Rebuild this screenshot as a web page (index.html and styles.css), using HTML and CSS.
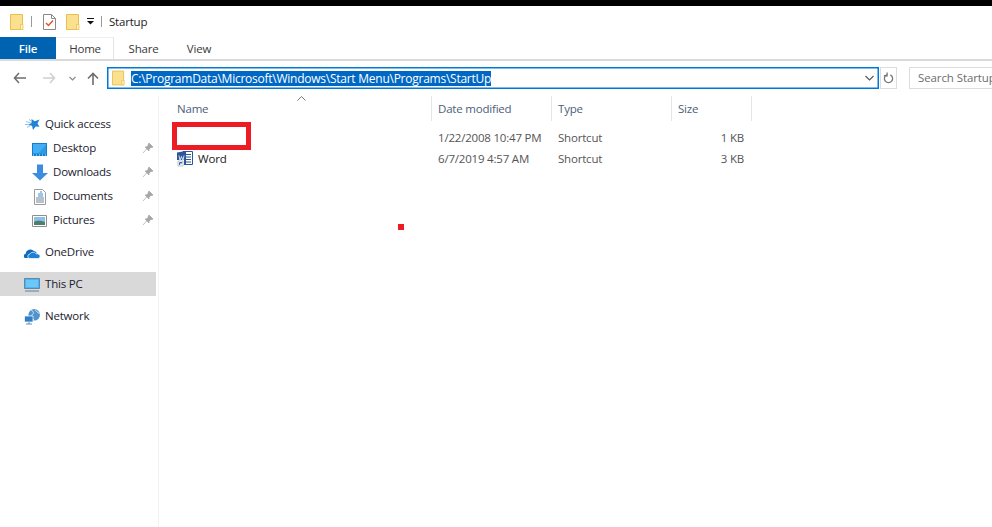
FILE: index.html
```html
<!DOCTYPE html>
<html lang="en">
<head>
<meta charset="utf-8">
<title>Startup</title>
<link rel="stylesheet" href="styles.css">
</head>
<body>
<div class="window">
  <div class="blackbar"></div>
  <div class="titlebar">
    <svg class="folder" viewBox="0 0 14 16"><path d="M.5.5h12v15H.5z" fill="#fbe08f" stroke="#e8c04f"/><path d="M10.5 10.5h2.500v5h-2.500z" fill="#fff3c4" stroke="#e8c04f" stroke-width=".8"/></svg>
    <span class="qsep first"></span>
    <svg class="props" viewBox="0 0 13 16"><path d="M.5.5h8l4 4v11H.5z" fill="#fff" stroke="#8a8a8a"/><path d="M8.500.5v4h4" fill="none" stroke="#8a8a8a"/><path d="M3 9l2.500 2.500L10 6.500" fill="none" stroke="#e2582a" stroke-width="1.500"/></svg>
    <svg class="folder second" viewBox="0 0 14 16"><path d="M.5.5h12v15H.5z" fill="#fbe08f" stroke="#e8c04f"/><path d="M10.500 10.500h2.500v5h-2.500z" fill="#fff3c4" stroke="#e8c04f" stroke-width=".8"/></svg>
    <svg class="qdrop" viewBox="0 0 7 7"><path d="M0 .5h7" stroke="#111" fill="none"/><path d="M0 3h7L3.500 6.500z" fill="#111"/></svg>
    <span class="qsep"></span>
    <span class="wintitle">Startup</span>
  </div>
  <div class="ribbon">
    <span class="tab file">File</span>
    <span class="tab home">Home</span>
    <span class="tab share">Share</span>
    <span class="tab view">View</span>
  </div>
  <div class="addressrow">
    <svg class="nav back" viewBox="0 0 13 12"><path d="M6 1L1.500 6 6 11M1.500 6H13" fill="none" stroke="#6d6d6d" stroke-width="1.500"/></svg>
    <svg class="nav fwd" viewBox="0 0 13 12"><path d="M7 1l4.500 5L7 11M11.500 6H0" fill="none" stroke="#cfcfcf" stroke-width="1.500"/></svg>
    <svg class="nav down" viewBox="0 0 7 5"><path d="M.5 1l3 3 3-3" fill="none" stroke="#8a8a8a" stroke-width="1.200"/></svg>
    <svg class="nav up" viewBox="0 0 12 13"><path d="M1 6.500L6 1.500l5 5M6 1.500V13" fill="none" stroke="#6d6d6d" stroke-width="1.600"/></svg>
    <div class="pathbox">
      <svg class="folder pathfolder" viewBox="0 0 14 16"><path d="M.5.5h12v15H.5z" fill="#fbe08f" stroke="#e8c04f"/><path d="M10.500 10.500h2.500v5h-2.500z" fill="#fff3c4" stroke="#e8c04f" stroke-width=".8"/></svg>
      <span class="pathtext">C:\ProgramData\Microsoft\Windows\Start Menu\Programs\StartUp</span>
      <svg class="pathdrop" viewBox="0 0 9 6"><path d="M.5 1l4 4 4-4" fill="none" stroke="#555" stroke-width="1.100"/></svg>
    </div>
    <div class="refresh"><svg viewBox="0 0 12 13"><path d="M4 2.500a4.500 4.500 0 1 0 4 0M4.500 0v3.500H1" fill="none" stroke="#777" stroke-width="1.400"/></svg></div>
    <div class="search">Search Startup</div>
  </div>
  <div class="main">
    <nav class="sidebar">
      <div class="navgroup">
        <div class="navitem top">
          <svg class="navicon" viewBox="0 0 16 17"><path d="M15.500 3.500l-2 4 2 3.200-3.900-.3L9 14l-1-4.200-4-.9 3.500-2L7.500 3l3.200 2.200z" fill="#1f82d8"/><path d="M2 5.500l5 1.500M5 3.500l3 2M1 8.500h4M3 11.500l3.500-2" stroke="#8fc6ef" fill="none"/></svg>
          <span>Quick access</span>
        </div>
        <div class="navitem sub">
          <svg class="navicon" viewBox="0 0 16 17"><path d="M0 3h15v13H0z" fill="#0f7fd0"/><path d="M1 4h13v9.500H1z" fill="#45aef2"/><path d="M6 13.500L14 5v8.500z" fill="#2e9ae6"/><path d="M1 15h1M4 15h1M7 15h1M10 15h1M13 15h1" stroke="#d5ecfb"/></svg>
          <span>Desktop</span><svg class="pin" viewBox="0 0 10 10"><path d="M6 0l4 4-1 .5-1.500 0L6 6.500 6 8 2 4l1.500 0L5 2.500 5.500 1zM3.500 6L0 10" fill="#a5a5a5" stroke="#a5a5a5" stroke-width=".7"/></svg>
        </div>
        <div class="navitem sub">
          <svg class="navicon" viewBox="0 0 16 17"><path d="M5 .500h6V9h5l-8 7.500L0 9h5z" fill="#3c8de0"/></svg>
          <span>Downloads</span><svg class="pin" viewBox="0 0 10 10"><path d="M6 0l4 4-1 .5-1.500 0L6 6.500 6 8 2 4l1.500 0L5 2.500 5.500 1zM3.500 6L0 10" fill="#a5a5a5" stroke="#a5a5a5" stroke-width=".7"/></svg>
        </div>
        <div class="navitem sub">
          <svg class="navicon" viewBox="0 0 16 17"><path d="M2.500 1.500h8l3 3v12h-11z" fill="#fff" stroke="#9a9a9a"/><path d="M4 10h8M4 12h8M4 14h8" stroke="#6f8494"/><path d="M8 4h2M6 6h5M6 8h5" stroke="#3c8de0"/></svg>
          <span>Documents</span><svg class="pin" viewBox="0 0 10 10"><path d="M6 0l4 4-1 .5-1.500 0L6 6.500 6 8 2 4l1.500 0L5 2.500 5.500 1zM3.500 6L0 10" fill="#a5a5a5" stroke="#a5a5a5" stroke-width=".7"/></svg>
        </div>
        <div class="navitem sub">
          <svg class="navicon" viewBox="0 0 16 17"><path d="M.500 3.500h14v11H.500z" fill="#fff" stroke="#8f8f8f"/><path d="M2 5h11v8H2z" fill="#8cc0e6"/><path d="M2 10c4-2 7-1 11 0v3H2z" fill="#4f7d70"/></svg>
          <span>Pictures</span><svg class="pin" viewBox="0 0 10 10"><path d="M6 0l4 4-1 .5-1.500 0L6 6.500 6 8 2 4l1.500 0L5 2.500 5.500 1zM3.500 6L0 10" fill="#a5a5a5" stroke="#a5a5a5" stroke-width=".7"/></svg>
        </div>
      </div>
      <div class="navitem top">
        <svg class="navicon" viewBox="0 0 16 17"><path d="M2 14a2 2 0 0 1-.5-4A5 5 0 0 1 10 7a3.500 3.500 0 0 1 3 3 2 2 0 0 1 1 4z" fill="#0f6cbd"/><path d="M6 14.500a2.200 2.200 0 0 1 0-4.400c1-2.400 4.800-2.400 6-.3 2.500-.3 4 1 4 2.600a2.100 2.100 0 0 1-2 2.100z" fill="#1d7fd6" stroke="#fff" stroke-width=".7"/></svg>
        <span>OneDrive</span>
      </div>
      <div class="navitem top selected">
        <svg class="navicon" viewBox="0 0 16 17"><path d="M.5 2.500h15v10H.5z" fill="#4fb4f4" stroke="#5f87a6"/><path d="M2 4h12v7H2z" fill="#6cc8fa"/><path d="M1 15h14" stroke="#8b9aa6" stroke-width="1.500"/></svg>
        <span>This PC</span>
      </div>
      <div class="navitem top">
        <svg class="navicon" viewBox="0 0 16 17"><circle cx="10.200" cy="6.800" r="5.800" fill="#4f93cf"/><path d="M7 2c3 1 3 4 1 5s-1 3 2 5M11 1.500c1.500 2 2 3 5 4" stroke="#cfe4f3" fill="none"/><path d="M.5 8h8.500v6H.5z" fill="#2f7fc6" stroke="#fff" stroke-width=".7"/><path d="M2 16h6M5 14v2" stroke="#6d8ca5"/></svg>
        <span>Network</span>
      </div>
    </nav>
    <section class="files">
      <svg class="sortcaret" viewBox="0 0 9 5"><path d="M.5 4.500l4-4 4 4" fill="none" stroke="#777"/></svg>
      <div class="filerow header">
        <span class="cell name">Name</span>
        <span class="cell date">Date modified</span>
        <span class="cell type">Type</span>
        <span class="cell size">Size</span>
      </div>
      <div class="filerow first">
        <span class="cell name"></span>
        <span class="cell date">1/22/2008 10:47 PM</span>
        <span class="cell type">Shortcut</span>
        <span class="cell size">1 KB</span>
      </div>
      <div class="filerow">
        <span class="cell name">
          <svg class="wordicon" viewBox="0 0 16 16"><path d="M6 .500h9.500v13H6z" fill="#fff" stroke="#2b579a"/><path d="M9 3.500h5M9 6h5M9 8.500h5M9 11h5" stroke="#2b579a"/><path d="M0 1.500l9-1.500v14l-9-1.500z" fill="#2b579a"/><path d="M2 4.500l1 5 1.500-4 1.500 4 1-5" stroke="#fff" fill="none" stroke-width=".8"/><path d="M0 9h7v7H0z" fill="#fff"/><path d="M1 10h5v5H1z" fill="#fff" stroke="#9a9a9a" stroke-width=".6"/><path d="M2.500 14v-2.500h2.500M5 11.500L3 13.500" stroke="#2a6fc0" fill="none"/></svg>
          Word
        </span>
        <span class="cell date">6/7/2019 4:57 AM</span>
        <span class="cell type">Shortcut</span>
        <span class="cell size">3 KB</span>
      </div>
    </section>
  </div>
  <div class="redact"></div>
  <div class="reddot"></div>
</div>
</body>
</html>
```

FILE: styles.css
```css
* { box-sizing: border-box; }
html, body { margin: 0; padding: 0; background: #fff; }
.window {
  position: relative;
  width: 992px;
  height: 527px;
  overflow: hidden;
  font-family: "Open Sans", "Noto Sans", sans-serif;
  font-size: 11.5px;
  letter-spacing: -0.2px;
  color: #1a1a1a;
}
svg { display: block; flex: none; }
.blackbar { height: 6px; background: #000; }

.titlebar { height: 31px; display: flex; align-items: center; padding-left: 10px; }
.folder { width: 14px; height: 16px; }
.qsep { width: 1px; height: 11px; background: #9a9a9a; }
.qsep.first { margin: 0 11px 0 7px; }
.props { width: 13px; height: 16px; }
.folder.second { margin-left: 10px; }
.qdrop { width: 7px; height: 7px; margin-left: 7px; }
.qsep:not(.first) { margin: 0 7px 0 7px; }
.wintitle { font-size: 11.5px; color: #222; }

.ribbon { height: 24px; display: flex; border-bottom: 2px solid #dadada; }
.tab { height: 22px; display: flex; align-items: center; justify-content: center; color: #3a3a3a; }
.tab.file { width: 56px; background: #0063b1; color: #fff; font-weight: 600; }
.tab.home { width: 58px; background: #fff; border-right: 1px solid #e3e3e3; border-top: 1px solid #eee; padding-left: 1px; }
.tab.share { width: 59px; }
.tab.view { width: 28px; margin-left: 12px; }

.addressrow { height: 35px; display: flex; align-items: center; padding: 6px 0 7px 0; }
.nav { flex: none; }
.nav.back { width: 13px; height: 12px; margin-left: 13px; }
.nav.fwd { width: 13px; height: 12px; margin-left: 17px; }
.nav.down { width: 7px; height: 5px; margin-left: 13px; }
.nav.up { width: 12px; height: 13px; margin-left: 11px; }
.pathbox {
  width: 772px; height: 22px; margin-left: 8px; flex: none;
  border: 1px solid #0078d7;
  box-shadow: inset 0 0 0 0.5px #0078d7;
  display: flex; align-items: center; padding-left: 4px;
}
.pathfolder { width: 13px; height: 16px; }
.pathtext {
  margin-left: 6px; background: #0068c4; color: #fff; height: 15px; line-height: 15px;
  font-size: 12px; letter-spacing: -0.25px; white-space: nowrap;
}
.pathdrop { width: 9px; height: 6px; margin-left: auto; margin-right: 4px; }
.refresh {
  width: 17px; height: 22px; margin-left: 1px; flex: none;
  border: 1px solid #dcdcdc;
  display: flex; align-items: center; justify-content: center;
}
.refresh svg { width: 11px; height: 13px; }
.search {
  flex: 1; min-width: 0; height: 22px; margin-left: 12px;
  border: 1px solid #dcdcdc; border-right: 0;
  padding-left: 8px; line-height: 19px; color: #6d6d6d; white-space: nowrap;
  overflow: hidden;
  letter-spacing: -0.1px;
}

.main { display: flex; height: 431px; }
.sidebar { width: 159px; flex: none; padding-top: 16px; display: flex; flex-direction: column; gap: 8px; border-right: 1px solid #f2f2f2; }
.navgroup { display: flex; flex-direction: column; }
.navitem { height: 24px; width: 156px; display: flex; align-items: center; position: relative; padding-bottom: 2px; color: #1c1c30; white-space: nowrap; }
.navitem.top { padding-left: 24px; }
.navitem.sub { padding-left: 32px; }
.navitem.selected { background: #d9d9d9; }
.navicon { width: 16px; height: 17px; margin-right: 5px; position: relative; top: 1px; }
.pin { width: 10px; height: 10px; position: absolute; left: 143px; top: 7px; }

.files { position: relative; flex: 1; }
.sortcaret { position: absolute; left: 138px; top: 0; width: 9px; height: 5px; }
.filerow { display: flex; height: 21px; align-items: center; color: #555; }
.filerow.header { height: 25px; margin-bottom: 6px; color: #4c607a; }
.filerow.header .cell { height: 25px; display: flex; align-items: center; border-right: 1px solid #e5e5e5; }
.cell { display: block; flex: none; white-space: nowrap; }
.cell.name { width: 273px; padding-left: 18px; display: flex; align-items: center; color: #1a1a1a; }
.filerow.header .cell.name { color: #4c607a; }
.cell.date { width: 120px; padding-left: 6px; }
.cell.type { width: 120px; padding-left: 6px; }
.cell.size { width: 79px; text-align: right; padding-right: 7px; }
.filerow.header .cell.size { width: 80px; text-align: left; padding-left: 6px; padding-right: 0; }
.wordicon { width: 16px; height: 16px; margin-right: 5px; }

.redact { position: absolute; left: 172px; top: 122px; width: 79px; height: 28px; border: 5px solid #ed1c24; background: #fff; }
.reddot { position: absolute; left: 398px; top: 224px; width: 6px; height: 6px; background: #ed1c24; }
```
